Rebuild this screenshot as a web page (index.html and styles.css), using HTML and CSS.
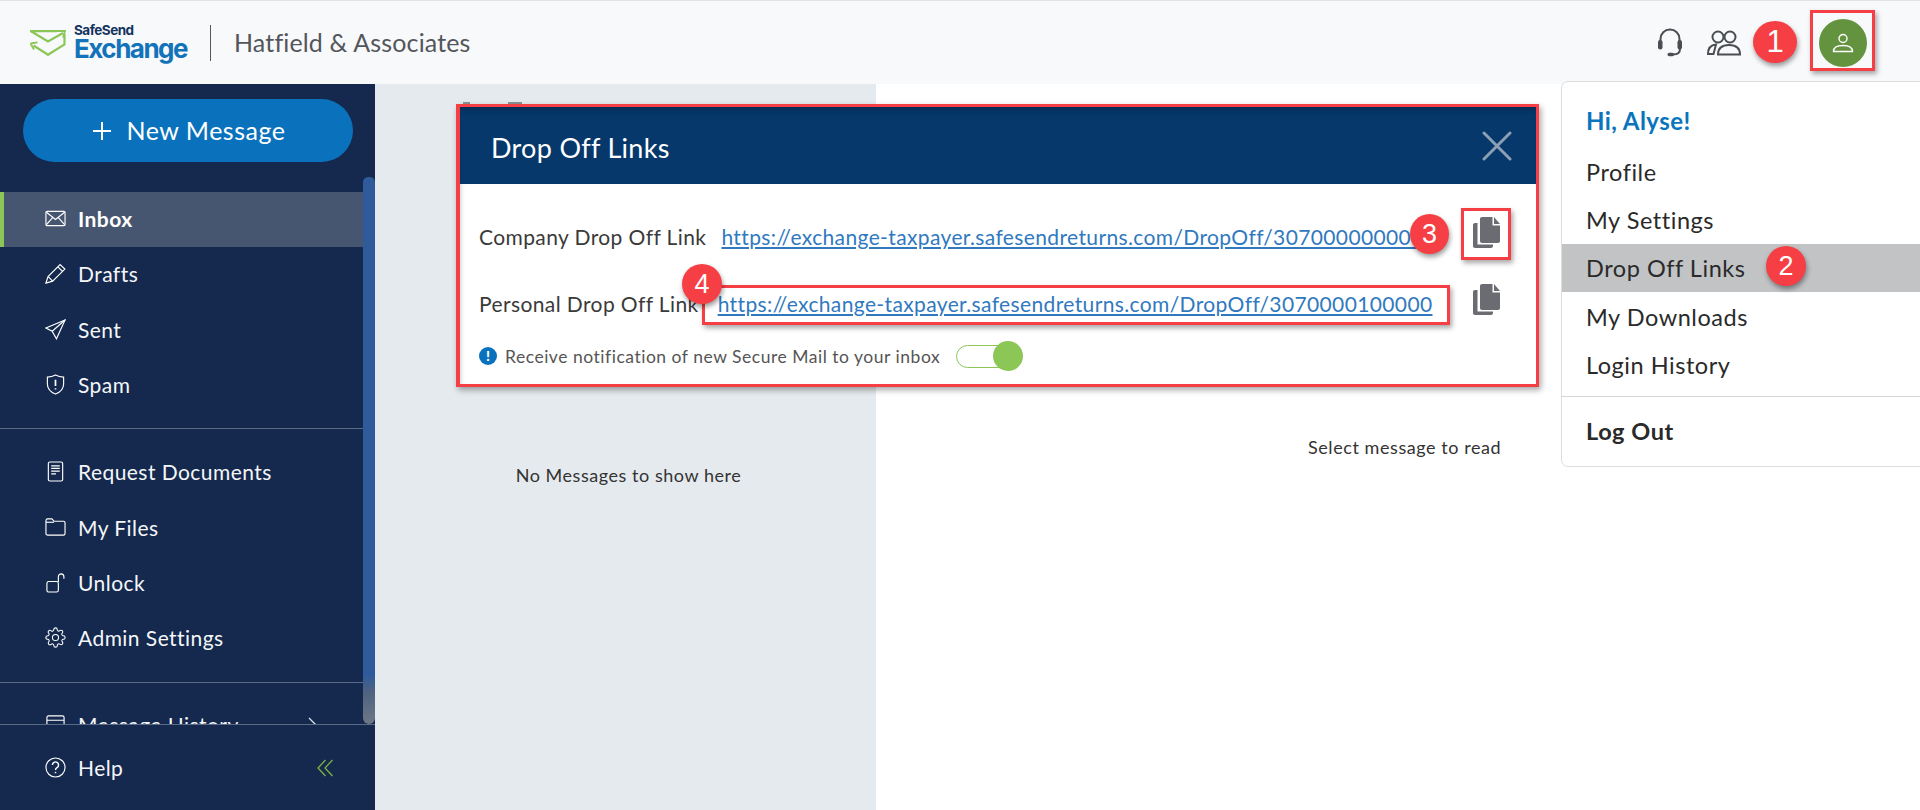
FILE: index.html
```html
<!DOCTYPE html>
<html lang="en">
<head>
<meta charset="utf-8">
<title>SafeSend Exchange</title>
<link rel="stylesheet" href="styles.css">
</head>
<body>
<div class="page">
  <header class="topbar">
    <div class="brand">
      <svg class="logo-mark" viewBox="0 0 36 26" fill="none" stroke="#8bc656" stroke-width="2.200">
        <path d="M0 1.200h27M1 1.200l17 10.300 15-8.500"/><path d="M27 1h8l-2 6.500" stroke-width="1.800"/>
        <path d="M34.500 4v10.500L18 24.800 3.500 15.500"/><path d="M.5 13.500l7-1.200M.5 13.500l3.500 6" stroke-width="1.800"/>
      </svg>
      <div class="logo-text">
        <span class="logo-top">SafeSend</span>
        <span class="logo-main">Exchange</span>
      </div>
      <span class="brand-sep"></span>
      <span class="company">Hatfield &amp; Associates</span>
    </div>
    <div class="top-actions">
      <svg class="top-icon headset" viewBox="0 0 26 30" fill="none" stroke="#4a4d52" stroke-width="2">
        <path d="M3.500 14V11a9.500 9.500 0 0 1 19 0v3"/>
        <rect x="1" y="12" width="4.500" height="9.500" rx="2.200" fill="#4a4d52" stroke="none"/>
        <rect x="20.500" y="12" width="4.500" height="9.500" rx="2.200" fill="#4a4d52" stroke="none"/>
        <path d="M23 21c0 4-3 5.500-7 5.500"/><rect x="10.500" y="24.800" width="6.500" height="3.400" rx="1.700" fill="#4a4d52" stroke="none"/>
      </svg>
      <svg class="top-icon people" viewBox="0 0 34 26" fill="none" stroke="#4a4d52" stroke-width="2">
        <circle cx="11" cy="7" r="5.500"/><circle cx="23" cy="7" r="5.500"/>
        <path d="M1 24c0-6 3-9 8-9.500L6.500 24z"/><path d="M11 24.500c0-6 4-9.500 11-9.500s11 3.500 11 9.500z"/>
      </svg>
      <div class="avatar">
        <svg viewBox="0 0 22 20" fill="none" stroke="#fff" stroke-width="1.400">
          <circle cx="11" cy="5.500" r="4"/><path d="M1.500 18.500c0-4 3.500-6 9.500-6s9.500 2 9.500 6z"/>
        </svg>
      </div>
    </div>
  </header>

  <div class="main">
    <aside class="sidebar">
      <div class="side-scroll">
        <div class="side-content">
          <button class="new-msg"><span class="plus"></span>New Message</button>
          <nav class="nav nav-first">
            <a class="nav-item active">
              <svg class="nav-icon" viewBox="0 0 22 22"><rect x="1" y="3.500" width="20" height="15" rx="1.200"/><path d="M1.500 4.500L11 12l9.500-7.500M1.500 17.500L8 10M20.500 17.500L14 10"/></svg>
              Inbox</a>
            <a class="nav-item">
              <svg class="nav-icon" viewBox="0 0 22 22"><path d="M1 21l2.200-6.800L15.800 1.600l5 4.800L8 19z"/><path d="M13.500 4l5 4.900M3.400 14.200L8 19"/></svg>
              Drafts</a>
            <a class="nav-item">
              <svg class="nav-icon" viewBox="0 0 22 22"><path d="M21 1L1 9.500l6.500 3.300 4.500 8z"/><path d="M21 1L7.500 12.800"/></svg>
              Sent</a>
            <a class="nav-item">
              <svg class="nav-icon" viewBox="0 0 22 22"><path d="M11 1c3 1.500 5.200 2 8.500 2.200v7.300c0 5-3.400 8.500-8.500 10.500-5.100-2-8.500-5.500-8.500-10.500V3.200C5.800 3 8 2.500 11 1z"/><path d="M11 6v6.500M11 14.800v1.400" stroke-width="1.800"/></svg>
              Spam</a>
          </nav>
          <div class="nav-sep"></div>
          <nav class="nav nav-second">
            <a class="nav-item">
              <svg class="nav-icon" viewBox="0 0 22 22"><rect x="3.500" y="1" width="15" height="20" rx="1.600"/><path d="M6.500 5h9M6.500 7.800h9M6.500 10.600h9M6.500 13.400h5" stroke-width="1.300"/></svg>
              Request Documents</a>
            <a class="nav-item">
              <svg class="nav-icon" viewBox="0 0 22 22"><path d="M1 5.500V3.800C1 2.800 1.800 2 2.800 2h4.500l2.200 2.500h9.700c1 0 1.800.8 1.800 1.800v11c0 1-.8 1.700-1.800 1.700H2.800c-1 0-1.800-.7-1.800-1.700z"/><path d="M1 5.500h8.500"/></svg>
              My Files</a>
            <a class="nav-item">
              <svg class="nav-icon" viewBox="0 0 22 22"><rect x="2" y="10" width="12" height="11" rx="2"/><path d="M14 10.500V5a3 3 0 0 1 3-3 3 3 0 0 1 2.800 3v2"/></svg>
              Unlock</a>
            <a class="nav-item">
              <svg class="nav-icon" viewBox="0 0 24 24"><circle cx="12" cy="12" r="3.500"/><path d="M19.400 15a1.650 1.650 0 0 0 .33 1.820l.06.06a2 2 0 0 1 0 2.830 2 2 0 0 1-2.830 0l-.06-.06a1.650 1.650 0 0 0-1.820-.33 1.650 1.650 0 0 0-1 1.510V21a2 2 0 0 1-2 2 2 2 0 0 1-2-2v-.09A1.650 1.650 0 0 0 9 19.400a1.650 1.650 0 0 0-1.820.33l-.06.06a2 2 0 0 1-2.830 0 2 2 0 0 1 0-2.830l.06-.06a1.650 1.650 0 0 0 .33-1.820 1.650 1.650 0 0 0-1.510-1H3a2 2 0 0 1-2-2 2 2 0 0 1 2-2h.09A1.650 1.650 0 0 0 4.600 9a1.650 1.650 0 0 0-.33-1.820l-.06-.06a2 2 0 0 1 0-2.830 2 2 0 0 1 2.830 0l.06.06a1.650 1.650 0 0 0 1.820.33H9a1.650 1.650 0 0 0 1-1.510V3a2 2 0 0 1 2-2 2 2 0 0 1 2 2v.09a1.650 1.650 0 0 0 1 1.510 1.650 1.650 0 0 0 1.820-.33l.06-.06a2 2 0 0 1 2.830 0 2 2 0 0 1 0 2.830l-.06.06a1.650 1.650 0 0 0-.33 1.820V9a1.650 1.650 0 0 0 1.510 1H21a2 2 0 0 1 2 2 2 2 0 0 1-2 2h-.09a1.650 1.650 0 0 0-1.510 1z"/></svg>
              Admin Settings</a>
          </nav>
          <div class="nav-sep"></div>
          <nav class="nav nav-third">
            <a class="nav-item">
              <svg class="nav-icon" viewBox="0 0 22 22"><rect x="2" y="2" width="18" height="18" rx="1.600"/><path d="M2 6.500h18M6 11h10M6 15h7"/></svg>
              Message History
              <svg class="nav-chev" viewBox="0 0 8 14"><path d="M1 1l6 6-6 6"/></svg>
            </a>
          </nav>
        </div>
        <div class="thumb"></div>
      </div>
      <div class="side-foot">
        <a class="nav-item foot-help">
          <svg class="nav-icon" viewBox="0 0 22 22"><circle cx="11" cy="11" r="10"/><path d="M7.800 8.300a3.200 3.200 0 1 1 4.800 2.800c-1 .6-1.600 1.200-1.600 2.400" stroke-width="1.500"/><path d="M11 15.500v1.500" stroke-width="1.600"/></svg>
          Help</a>
        <svg class="collapse" viewBox="0 0 16 18" fill="none" stroke="#7db343" stroke-width="1.300"><path d="M8.500 1L1 9l7.500 8M15.500 1L8 9l7.500 8"/></svg>
      </div>
    </aside>

    <section class="list-col">
      <div class="peek"><span class="peek-a"></span><span class="peek-b"></span></div>
      <p class="empty-list">No Messages to show here</p>
    </section>
    <section class="read-col">
      <p class="empty-read">Select message to read</p>
    </section>
  </div>

  <div class="modal">
    <div class="modal-head">
      <h2 class="modal-title">Drop Off Links</h2>
      <svg class="modal-close" viewBox="0 0 30 30" fill="none" stroke="#8b9fb5" stroke-width="3" stroke-linecap="round"><path d="M2 2l26 26M28 2L2 28"/></svg>
    </div>
    <div class="modal-body">
      <div class="link-row row-company">
        <span class="link-label label-company">Company Drop Off Link</span>
        <a class="drop-link link-company">https://exchange-taxpayer.safesendreturns.com/DropOff/3070000000000</a>
        <svg class="copy-icon" viewBox="0 0 27 32" fill="#6a6c72"><path d="M9 0h10.500v8.500H27V24c0 1.100-.9 2-2 2H9c-1.100 0-2-.9-2-2V2c0-1.100.9-2 2-2z"/><path d="M21 0l6 7h-6z"/><path d="M4.500 6v21.500H20V29c0 1.100-.9 2-2 2H2c-1.100 0-2-.9-2-2V8c0-1.100.9-2 2-2z"/></svg>
      </div>
      <div class="link-row row-personal">
        <span class="link-label label-personal">Personal Drop Off Link</span>
        <a class="drop-link link-personal">https://exchange-taxpayer.safesendreturns.com/DropOff/3070000100000</a>
        <svg class="copy-icon" viewBox="0 0 27 32" fill="#6a6c72"><path d="M9 0h10.500v8.500H27V24c0 1.100-.9 2-2 2H9c-1.100 0-2-.9-2-2V2c0-1.100.9-2 2-2z"/><path d="M21 0l6 7h-6z"/><path d="M4.500 6v21.500H20V29c0 1.100-.9 2-2 2H2c-1.100 0-2-.9-2-2V8c0-1.100.9-2 2-2z"/></svg>
      </div>
      <div class="notify-row">
        <span class="info-dot">!</span>
        <span class="notify-text">Receive notification of new Secure Mail to your inbox</span>
        <span class="toggle"><span class="knob"></span></span>
      </div>
    </div>
  </div>

  <div class="menu">
    <div class="menu-hi">Hi, Alyse!</div>
    <a class="menu-item">Profile</a>
    <a class="menu-item">My Settings</a>
    <a class="menu-item hover">Drop Off Links</a>
    <a class="menu-item">My Downloads</a>
    <a class="menu-item">Login History</a>
    <div class="menu-sep"></div>
    <a class="menu-item menu-out">Log Out</a>
  </div>

  <div class="mark mark-avatar"></div>
  <div class="mark mark-copy"></div>
  <div class="mark mark-link"></div>
  <span class="badge badge-1">1</span>
  <span class="badge badge-2">2</span>
  <span class="badge badge-3">3</span>
  <span class="badge badge-4">4</span>
</div>
</body>
</html>
```
FILE: styles.css
```css
* { box-sizing: border-box; }
html, body { margin: 0; height: 100%; overflow: hidden; }
body { font-family: "Lato", "Noto Sans", sans-serif; color: #2b2b2b; background: #fff; }
a { color: inherit; text-decoration: none; }
p, h2 { margin: 0; font-weight: 400; }

.page { position: relative; width: 1920px; height: 810px; display: flex; flex-direction: column; overflow: hidden; }

/* top bar */
.topbar { height: 84px; flex: none; display: flex; align-items: center; justify-content: space-between; background: #f8f9fb; border-top: 1px solid #e2e4e7; }
.brand { display: flex; align-items: center; padding-left: 30px; }
.logo-mark { width: 36px; height: 26px; margin-right: 8px; }
.logo-text { display: flex; flex-direction: column; width: 116px; }
.logo-top { font-family: "Inter", sans-serif; font-weight: 700; font-size: 13.500px; line-height: 13px; letter-spacing: -.5px; color: #14335f; }
.logo-main { font-family: "Inter", sans-serif; font-weight: 700; font-size: 26px; line-height: 24px; letter-spacing: -1.500px; color: #1273b9; }
.brand-sep { width: 1px; height: 36px; background: #55585c; margin-left: 20px; margin-right: 23px; }
.company { font-size: 25px; letter-spacing: .15px; color: #53565a; padding-bottom: 2px; }
.top-actions { display: flex; align-items: center; padding-right: 53px; }
.top-icon { display: block; }
.headset { width: 26px; height: 30px; margin-right: 24px; }
.people { width: 34px; height: 26px; margin-right: 78px; }
.avatar { width: 48px; height: 48px; border-radius: 50%; background: #63933f; display: flex; align-items: center; justify-content: center; }
.avatar svg { width: 22px; height: 20px; }

/* main */
.main { flex: 1; display: flex; min-height: 0; }
.sidebar { width: 375px; flex: none; display: flex; flex-direction: column; background: #14294d; color: #fff; }
.side-scroll { flex: 1; min-height: 0; display: flex; overflow: hidden; }
.side-content { width: 363px; flex: none; }
.thumb { width: 12px; margin-top: 93px; border-radius: 6px 6px 7px 7px; background: linear-gradient(to bottom, #2f5b9b 0, #2f5b9b 91%, #4d6280 94%, #6d7785 100%); }
.new-msg { display: flex; align-items: center; justify-content: center; width: 330px; height: 63px; margin: 15px 0 0 23px; border: 0; border-radius: 32px; background: #0a72bc; color: #fff; font-family: inherit; font-size: 25px; letter-spacing: .5px; padding: 0 0 2px 2px; }
.plus { position: relative; top: 1px; width: 18px; height: 18px; margin-right: 16px; background: linear-gradient(#fff,#fff) center/100% 2px no-repeat, linear-gradient(#fff,#fff) center/2px 100% no-repeat; }
.nav-first { margin-top: 30px; }
.nav-second { margin-top: 16px; }
.nav-third { margin-top: 15px; }
.nav-sep { height: 1px; margin-top: 15px; background: #5c6b85; }
.nav-item { display: flex; align-items: center; height: 55.330px; padding: 0 0 2px 45px; font-size: 21px; letter-spacing: .45px; color: #f4f6f9; }
.nav-item.active { background: #475670; border-left: 4px solid #8bc656; padding-left: 41px; font-weight: 700; color: #fff; }
.nav-icon { width: 21px; height: 21px; margin-right: 12px; flex: none; fill: none; stroke: #fff; stroke-width: 1.200; }
.nav-chev { width: 8px; height: 14px; margin-left: auto; margin-right: 47px; fill: none; stroke: #dfe3ea; stroke-width: 1.300; }
.side-foot { height: 86px; flex: none; display: flex; align-items: center; justify-content: space-between; border-top: 1px solid #5c6b85; padding-right: 42px; }
.foot-help { height: auto; padding-bottom: 0; }
.collapse { width: 16px; height: 18px; }

.list-col { width: 501px; flex: none; background: #e5eaee; position: relative; }
.peek-a, .peek-b { position: absolute; top: 18px; height: 6px; background: #8c8f94; }
.peek-a { left: 88px; width: 7px; }
.peek-b { left: 133px; width: 14px; }
.empty-list { position: absolute; top: 380px; left: 0; width: 100%; padding-left: 6px; text-align: center; font-size: 18px; letter-spacing: .54px; color: #333; line-height: 22px; }
.read-col { flex: 1; position: relative; }
.empty-read { position: absolute; top: 352px; left: 432px; font-size: 18px; letter-spacing: .57px; color: #333; line-height: 22px; }

/* modal */
.modal { position: absolute; left: 456px; top: 104px; width: 1083px; height: 283px; background: #fff; border: 3px solid #f63f44; border-left-width: 4px; box-shadow: 2px 3px 6px rgba(0,0,0,.35); display: flex; flex-direction: column; }
.modal-head { height: 77px; flex: none; display: flex; align-items: center; justify-content: space-between; background: #06386b; box-shadow: inset 0 6px 6px -4px rgba(0,0,0,.3); padding: 4px 24px 0 31px; }
.modal-title { font-size: 27px; letter-spacing: .3px; color: #fff; }
.modal-close { width: 30px; height: 30px; margin-top: -4px; }
.modal-body { flex: 1; display: flex; flex-direction: column; padding: 0 36px 0 19px; box-shadow: inset 4px 0 4px -3px rgba(0,0,0,.2); }
.link-row { display: flex; align-items: center; }
.row-company { height: 52px; margin-top: 26px; }
.row-personal { height: 52px; margin-top: 15px; }
.link-label { font-size: 21px; letter-spacing: .4px; color: #3a3a3a; white-space: nowrap; }
.label-company { margin-right: 15px; }
.label-personal { margin-right: 19px; }
.drop-link { font-size: 21px; letter-spacing: .37px; color: #3079bf; text-decoration: underline; white-space: nowrap; }
.copy-icon { width: 27px; height: 32px; margin-left: auto; flex: none; position: relative; top: -3px; }
.notify-row { display: flex; align-items: center; height: 30px; margin-top: 12px; }
.info-dot { width: 18px; height: 18px; flex: none; border-radius: 50%; background: #0a72bc; color: #fff; font-size: 14px; font-weight: 900; line-height: 18px; text-align: center; margin-right: 8px; }
.notify-text { font-size: 17.500px; letter-spacing: .52px; color: #555; white-space: nowrap; }
.toggle { position: relative; width: 56px; height: 23px; margin-left: 16px; border: 1.500px solid #8bc656; border-radius: 12px; }
.knob { position: absolute; right: -12px; top: -5px; width: 30px; height: 30px; border-radius: 50%; background: #8bc656; }

/* menu */
.menu { position: absolute; left: 1561px; top: 81px; width: 370px; height: 386px; padding-top: 15px; background: #fff; border: 1px solid #dcdddf; border-radius: 7px; }
.menu-hi { height: 50.500px; padding: 0 0 3px 24px; display: flex; align-items: center; font-size: 24px; font-weight: 700; letter-spacing: .45px; color: #0a75bc; }
.menu-item { display: flex; align-items: center; height: 48.200px; padding: 1px 0 0 24px; font-size: 23.500px; letter-spacing: .54px; color: #2a2a2a; }
.menu-item.hover { background: #c1c3c5; }
.menu-sep { height: 1px; margin-top: 8px; background: #d5d6d8; }
.menu-out { margin-top: 9px; font-weight: 700; }

/* annotations */
.mark { position: absolute; border: 3px solid #f63f44; box-shadow: 2px 3px 5px rgba(0,0,0,.35); }
.mark-avatar { left: 1810px; top: 10px; width: 65px; height: 61px; }
.mark-copy { left: 1461px; top: 208px; width: 50px; height: 52px; }
.mark-link { left: 702px; top: 285px; width: 748px; height: 40px; }
.badge { position: absolute; display: flex; align-items: center; justify-content: center; border-radius: 50%; background: #f63f44; color: #fff; font-family: "Liberation Sans", sans-serif; box-shadow: 1px 3px 5px rgba(0,0,0,.4); }
.badge-1 { left: 1753px; top: 21px; width: 44px; height: 42px; font-size: 31px; }
.badge-2 { left: 1766px; top: 246px; width: 40px; height: 40px; font-size: 27px; }
.badge-3 { left: 1410px; top: 214px; width: 39px; height: 40px; font-size: 27px; }
.badge-4 { left: 682px; top: 264px; width: 40px; height: 40px; font-size: 27px; }
```
